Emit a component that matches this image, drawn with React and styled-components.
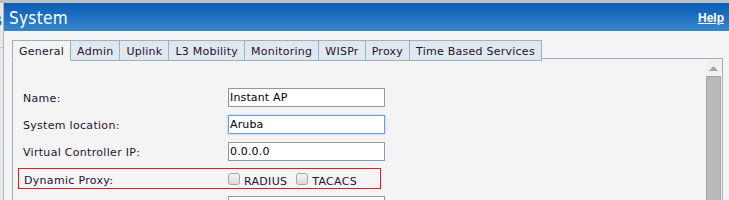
import React from "react";
import styled, { createGlobalStyle } from "styled-components";

const GlobalStyle = createGlobalStyle`
  html, body {
    margin: 0;
    padding: 0;
    background: #f4f4f4;
    overflow: hidden;
  }
  body {
    font-family: "DejaVu Sans", Verdana, sans-serif;
    font-size: 11px;
    color: #222;
  }
`;

const tabs = [
  "General",
  "Admin",
  "Uplink",
  "L3 Mobility",
  "Monitoring",
  "WISPr",
  "Proxy",
  "Time Based Services",
];

const fields = [
  { label: "Name:", value: "Instant AP" },
  { label: "System location:", value: "Aruba", focused: true },
  { label: "Virtual Controller IP:", value: "0.0.0.0" },
];

function Checkbox({ label }) {
  return (
    <CheckItem>
      <Box />
      <CheckText>{label}</CheckText>
    </CheckItem>
  );
}

function App() {
  return (
    <>
      <GlobalStyle />
      <Page>
        <TopBar />
        <Main>
          <LeftStrip>
            <StripTop>
              <Glyph>s</Glyph>
            </StripTop>
          </LeftStrip>
          <Dialog>
            <Header>
              <Title>System</Title>
              <HelpLink href="#">Help</HelpLink>
            </Header>
            <Body>
              <TabBar>
                {tabs.map((t, i) => (
                  <Tab key={t} active={i === 0}>
                    {t}
                  </Tab>
                ))}
              </TabBar>
              <Panel>
                <Content>
                  {fields.map((f) => (
                    <Row key={f.label}>
                      <Label>{f.label}</Label>
                      <Input focused={f.focused} defaultValue={f.value} />
                    </Row>
                  ))}
                  <Row>
                    <Highlight>
                      <Label>Dynamic Proxy:</Label>
                      <Checks>
                        <Checkbox label="RADIUS" />
                        <Checkbox label="TACACS" />
                      </Checks>
                    </Highlight>
                  </Row>
                  <Row>
                    <Label />
                    <Input defaultValue="" />
                  </Row>
                </Content>
                <Scrollbar>
                  <ArrowButton>
                    <svg width="9" height="5" viewBox="0 0 9 5">
                      <path d="M0 5 L4.5 0 L9 5 Z" fill="#a3a3a3" />
                    </svg>
                  </ArrowButton>
                  <Thumb />
                </Scrollbar>
              </Panel>
            </Body>
          </Dialog>
        </Main>
      </Page>
    </>
  );
}

const Page = styled.div`
  width: 729px;
  height: 200px;
  display: flex;
  flex-direction: column;
  overflow: hidden;
`;

const TopBar = styled.div`
  height: 3px;
  background: #bfbfbf;
  flex: none;
`;

const Main = styled.div`
  flex: 1;
  display: flex;
  min-height: 0;
`;

const LeftStrip = styled.div`
  width: 3px;
  flex: none;
  background: #e9e9e9;
  overflow: hidden;
`;

const StripTop = styled.div`
  height: 44px;
  border-bottom: 1px solid #c4c4c4;
  overflow: hidden;
`;

const Glyph = styled.span`
  display: block;
  margin: 7px 0 0 -8px;
  font-size: 17px;
  font-weight: bold;
  color: #1f6fc0;
  line-height: 20px;
`;

const Dialog = styled.div`
  flex: 1;
  display: flex;
  flex-direction: column;
  border-left: 1px solid #b3b3b3;
  min-width: 0;
`;

const Header = styled.div`
  height: 28px;
  flex: none;
  display: flex;
  align-items: center;
  justify-content: space-between;
  padding: 0 5px 0 5px;
  background: linear-gradient(#0a5cb6, #3587cc);
`;

const Title = styled.div`
  font-family: "DejaVu Sans Condensed", "Liberation Sans", sans-serif;
  font-stretch: condensed;
  font-size: 17px;
  letter-spacing: 0.3px;
  color: #fff;
  padding-top: 1px;
`;

const HelpLink = styled.a`
  font-family: "Liberation Sans", Arial, sans-serif;
  font-size: 12px;
  font-weight: bold;
  color: #fff;
  text-decoration: underline;
  padding-top: 2px;
`;

const Body = styled.div`
  flex: 1;
  display: flex;
  flex-direction: column;
  padding: 9px 6px 0 8px;
  min-height: 0;
`;

const TabBar = styled.div`
  display: flex;
  height: 19px;
  flex: none;
  position: relative;
  z-index: 1;
`;

const Tab = styled.div`
  display: flex;
  align-items: center;
  padding: 1px 6px 0 6px;
  height: 18px;
  letter-spacing: 0.25px;
  border: 1px solid #9ab0c6;
  border-left-width: ${(p) => (p.active ? "1px" : "0")};
  border-bottom-color: ${(p) => (p.active ? "#f4f4f4" : "#9ab0c6")};
  background: ${(p) => (p.active ? "#f4f4f4" : "#dfe8ee")};
  color: #2a1030;
  white-space: nowrap;
`;

const Panel = styled.div`
  flex: 1;
  display: flex;
  margin-top: -1px;
  border: 1px solid #9ab0c6;
  border-bottom: none;
  min-height: 0;
`;

const Content = styled.div`
  flex: 1;
  display: flex;
  flex-direction: column;
  padding: 25px 0 0 5px;
`;

const Row = styled.div`
  height: 27px;
  flex: none;
  display: flex;
  align-items: center;
`;

const Label = styled.div`
  width: 205px;
  flex: none;
  padding: 2px 0 0 5px;
  letter-spacing: 0.3px;
  color: #2a1030;
`;

const Input = styled.input`
  box-sizing: border-box;
  width: 157px;
  height: 19px;
  margin: 0;
  padding: 0 1px;
  font-family: "DejaVu Sans", Verdana, sans-serif;
  font-size: 11px;
  letter-spacing: 0.15px;
  color: #000;
  background: #fff;
  border: 1px solid ${(p) => (p.focused ? "#6fa0da" : "#8c99a6")};
  box-shadow: ${(p) => (p.focused ? "0 0 2px #9cc2ee" : "none")};
  border-radius: 0;
  outline: none;
`;

const Highlight = styled.div`
  display: flex;
  align-items: center;
  box-sizing: border-box;
  width: 363px;
  height: 21px;
  border: 1px solid #e21b23;
  padding-top: 1px;
`;

const Checks = styled.div`
  display: flex;
  align-items: center;
  gap: 9px;
  margin-left: -1px;
`;

const CheckItem = styled.div`
  display: flex;
  align-items: center;
  gap: 4px;
`;

const Box = styled.span`
  box-sizing: border-box;
  width: 12px;
  height: 12px;
  border: 1px solid #a6a6a6;
  border-radius: 3px;
  background: linear-gradient(#f6f6f6, #dadada);
`;

const CheckText = styled.span`
  padding-top: 5px;
  letter-spacing: 0.3px;
  color: #2a1030;
`;

const Scrollbar = styled.div`
  width: 15px;
  flex: none;
  margin-right: 1px;
  padding-top: 1px;
  display: flex;
  flex-direction: column;
`;

const ArrowButton = styled.div`
  height: 16px;
  flex: none;
  display: flex;
  align-items: center;
  justify-content: center;
  background: #f0f0f0;
`;

const Thumb = styled.div`
  flex: 1;
  background: #b9b9b9;
  border: 1px solid #a4a4a4;
  border-bottom: none;
`;

export default App;
